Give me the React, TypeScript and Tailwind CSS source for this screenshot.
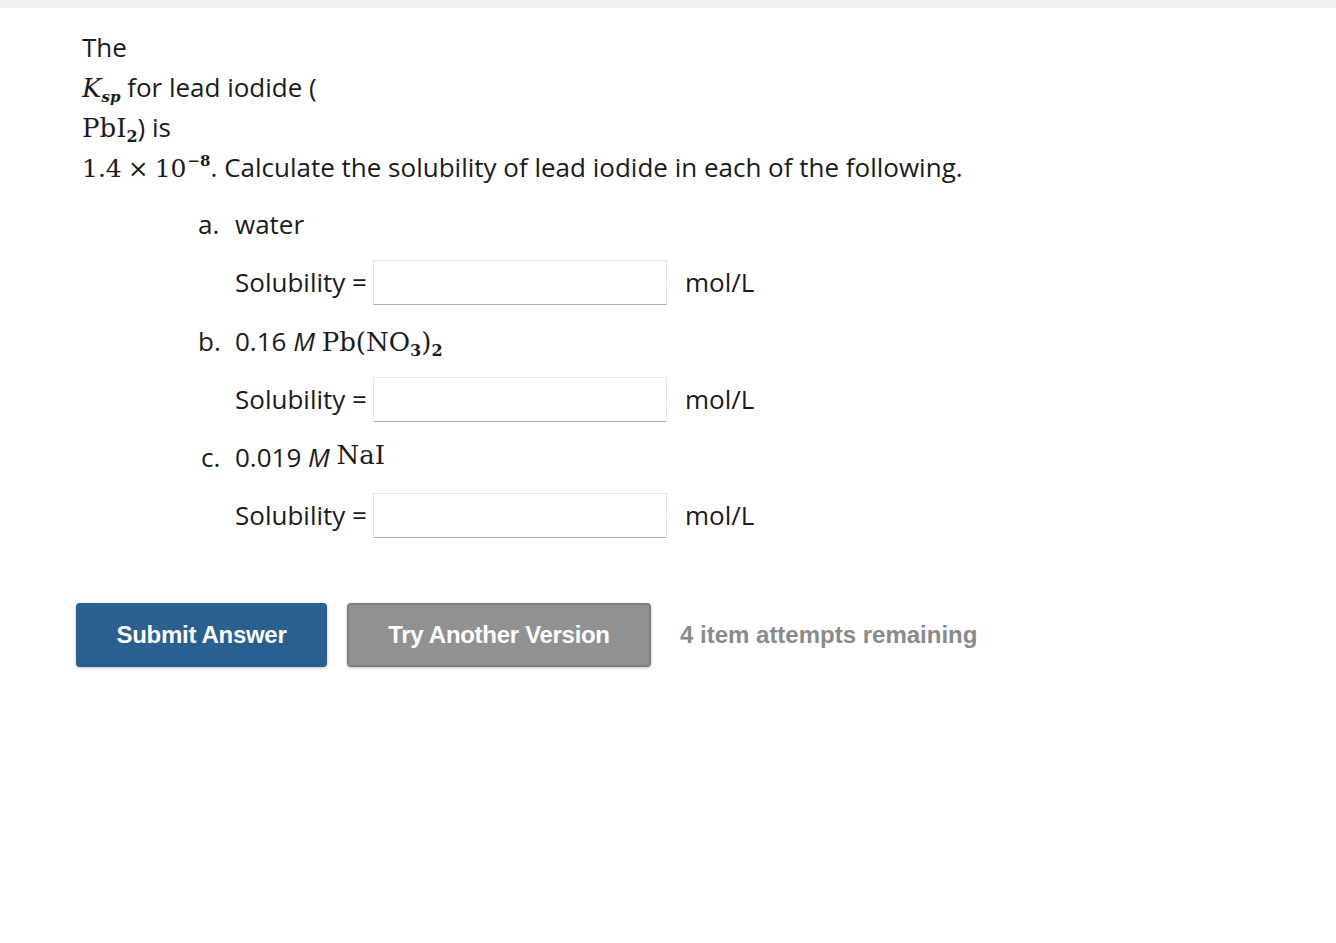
import React from 'react';

const mathFont = { fontFamily: '"DejaVu Serif", "Liberation Serif", serif' };

const Sub: React.FC<{ children: React.ReactNode }> = ({ children }) => (
    <span className="relative top-[5px] text-[16px] font-bold leading-none">{children}</span>
);

const Answer: React.FC = () => (
    <div className="flex items-center h-[44px]">
        <span className="w-[138px]">Solubility =</span>
        <input
            type="text"
            className="w-[294px] h-[45px] border border-[#e3e3e3] border-b-[#b5b5b5] bg-white outline-none px-2"
        />
        <span className="ml-[18px]">mol/L</span>
    </div>
);

const App: React.FC = () => {
    return (
        <div className="min-h-screen bg-white text-[#1b1b1b]" style={{ fontFamily: '"Open Sans", "Noto Sans", sans-serif' }}>
            <div className="h-[8px] bg-[#f0f0f0]" />
            <div className="pl-[82px] pt-[19px] text-[26px] leading-[40px]">
                <div className="h-[40px]">The</div>
                <div className="h-[40px]">
                    <span style={mathFont} className="italic">K<span className="relative top-[5px] text-[15px] font-bold leading-none">sp</span></span> for lead iodide (
                </div>
                <div className="h-[40px]">
                    <span style={mathFont}>PbI<Sub>2</Sub></span>) is
                </div>
                <div className="h-[41px]">
                    <span style={mathFont} className="text-[25px]">
                        1.4<span className="mx-[6px]">×</span>10<span className="relative top-[-11px] ml-[1px] text-[15px] font-bold leading-none">−8</span>
                    </span>. Calculate the solubility of lead iodide in each of the following.
                </div>

                <div className="pl-[116px] mt-[16px]">
                    <div className="flex h-[40px] items-center">
                        <span className="w-[37px]">a.</span>
                        <span>water</span>
                    </div>
                    <div className="pl-[37px] mt-[16px]">
                        <Answer />
                    </div>

                    <div className="flex h-[40px] items-center mt-[17px]">
                        <span className="w-[37px]">b.</span>
                        <span>0.16 <i>M</i> <span style={mathFont}>Pb(NO<Sub>3</Sub>)<Sub>2</Sub></span></span>
                    </div>
                    <div className="pl-[37px] mt-[16px]">
                        <Answer />
                    </div>

                    <div className="flex h-[40px] items-center mt-[16px]">
                        <span className="w-[37px] pl-[3px]">c.</span>
                        <span>0.019 <i>M</i> <span style={mathFont} className="relative top-[-3px]">NaI</span></span>
                    </div>
                    <div className="pl-[37px] mt-[16px]">
                        <Answer />
                    </div>
                </div>
            </div>

            <div className="flex items-center pl-[76px] mt-[66px]" style={{ fontFamily: '"Liberation Sans", Arial, sans-serif' }}>
                <button className="w-[251px] h-[64px] rounded-[4px] bg-[#2a5f92] text-white font-bold text-[24px] tracking-[-0.3px] shadow-[0_1px_3px_rgba(0,0,0,0.25)]">
                    Submit Answer
                </button>
                <button className="ml-[20px] w-[304px] h-[64px] rounded-[4px] bg-[#919191] border-2 border-[#7e7e7e] text-white font-bold text-[24px] tracking-[-0.3px] shadow-[0_1px_3px_rgba(0,0,0,0.25)]">
                    Try Another Version
                </button>
                <span className="ml-[29px] text-[#8a8a8a] font-bold text-[24px]">4 item attempts remaining</span>
            </div>
        </div>
    );
};

export default App;
